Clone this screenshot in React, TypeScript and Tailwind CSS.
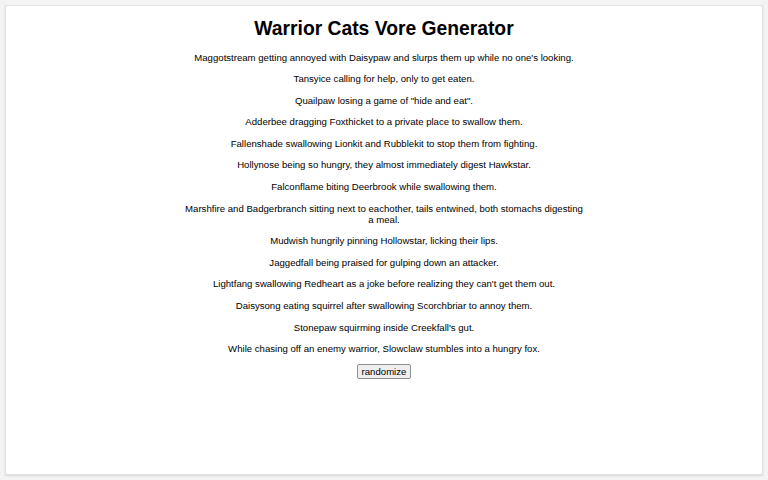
import React, { useState } from "react";

const prompts: string[] = [
  "Maggotstream getting annoyed with Daisypaw and slurps them up while no one's looking.",
  "Tansyice calling for help, only to get eaten.",
  "Quailpaw losing a game of \"hide and eat\".",
  "Adderbee dragging Foxthicket to a private place to swallow them.",
  "Fallenshade swallowing Lionkit and Rubblekit to stop them from fighting.",
  "Hollynose being so hungry, they almost immediately digest Hawkstar.",
  "Falconflame biting Deerbrook while swallowing them.",
  "Marshfire and Badgerbranch sitting next to eachother, tails entwined, both stomachs digesting a meal.",
  "Mudwish hungrily pinning Hollowstar, licking their lips.",
  "Jaggedfall being praised for gulping down an attacker.",
  "Lightfang swallowing Redheart as a joke before realizing they can't get them out.",
  "Daisysong eating squirrel after swallowing Scorchbriar to annoy them.",
  "Stonepaw squirming inside Creekfall's gut.",
  "While chasing off an enemy warrior, Slowclaw stumbles into a hungry fox.",
];

export default function App() {
  const [lines, setLines] = useState(prompts);

  const shuffle = () => {
    const next = [...lines];
    for (let i = next.length - 1; i > 0; i--) {
      const j = Math.floor(Math.random() * (i + 1));
      [next[i], next[j]] = [next[j], next[i]];
    }
    setLines(next);
  };

  return (
    <div className="h-[480px] w-[768px] bg-[#f4f4f4] p-[5px] font-['Liberation_Sans',Arial,sans-serif] text-black">
      <div className="flex h-full flex-col items-center border border-[#e2e2e2] bg-white pt-[11px] shadow-[0_1px_2px_rgba(0,0,0,0.12)]">
        <h1 className="text-[19.3px] font-bold leading-[23px]">Warrior Cats Vore Generator</h1>
        <div className="mt-[11.5px] flex w-[402px] flex-col gap-[10.6px] text-center text-[9.6px] leading-[11px]">
          {lines.map((line, i) => (
            <p key={i}>{line}</p>
          ))}
        </div>
        <button
          onClick={shuffle}
          className="mt-[10px] h-[15px] rounded-[2px] border border-[#8f8f8f] bg-[#efefef] px-[4px] text-[9.6px] leading-[12px] text-black"
        >
          randomize
        </button>
      </div>
    </div>
  );
}
